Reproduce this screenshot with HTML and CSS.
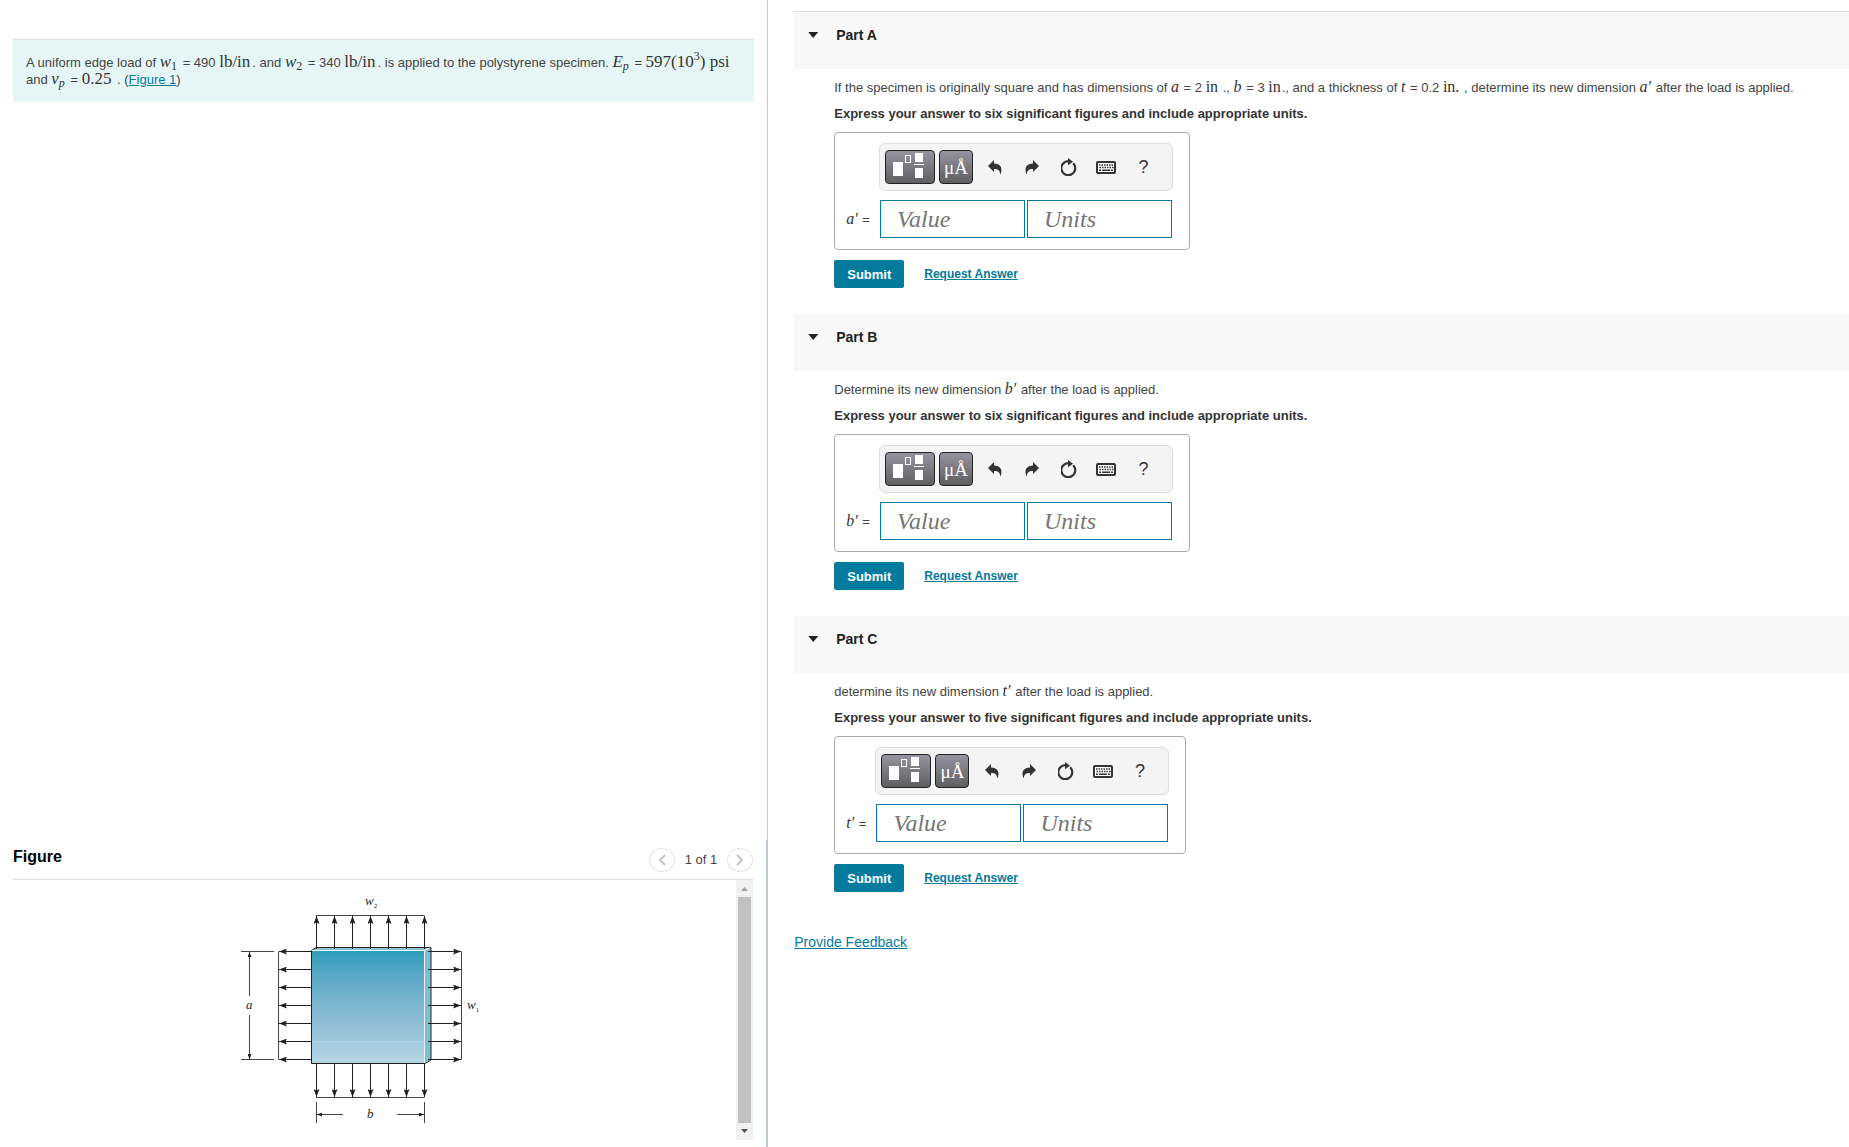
FILE: index.html
```html
<!DOCTYPE html>
<html lang="en">
<head>
    <meta charset="UTF-8">
    <meta name="viewport" content="width=device-width, initial-scale=1.0">
    <title>Polystyrene Specimen</title>
    <link rel="stylesheet" href="styles.css">
</head>
<body>
    <!-- shared icons -->
    <svg class="sprite" aria-hidden="true">
        <symbol id="icon-template" viewBox="0 0 34 28">
            <rect x="0" y="11" width="10" height="14" fill="#fff"/>
            <rect x="12.5" y="4.5" width="5" height="7" fill="none" stroke="#fff"/>
            <rect x="22" y="2" width="8" height="9" fill="#fff"/>
            <rect x="21" y="13" width="10" height="1" fill="#fff"/>
            <rect x="22" y="17" width="8" height="10" fill="#fff"/>
        </symbol>
        <symbol id="icon-undo" viewBox="0 0 14 15">
            <path d="M0 6 6 0v3.400c5 .2 8 2.600 7.400 7.600-.1 1.300-.6 2.600-1.400 3.600.4-3.600-1.400-5.600-6-5.600v3z" fill="#333"/>
        </symbol>
        <symbol id="icon-redo" viewBox="0 0 14 15">
            <path d="M14 6 8 0v3.400C3 3.600 0 6 .6 11c.1 1.300.6 2.600 1.400 3.600C1.600 11 3.400 9 8 9v3z" fill="#333"/>
        </symbol>
        <symbol id="icon-reset" viewBox="0 0 16 18">
            <path d="M12.200 5.200A7 7 0 1 1 8 3.200" fill="none" stroke="#333" stroke-width="2.200"/>
            <path d="M7 0 12 3.800 7 7.200z" fill="#333"/>
        </symbol>
        <symbol id="icon-keyboard" viewBox="0 0 20 13">
            <rect x="1" y="1" width="18" height="11" rx="1" fill="#fff" stroke="#333" stroke-width="2"/>
            <path d="M3 4h14M3.500 6.500h14" stroke="#333" stroke-width="1.500" stroke-dasharray="1.500 1"/>
            <path d="M3 9.200h2M6 9.200h8M15 9.200h2" stroke="#333" stroke-width="1.500"/>
        </symbol>
    </svg>

    <div class="page">
        <div class="left">
            <div class="intro">
                A uniform edge load of <var>w<sub>1</sub></var> = 490 <span class="tex">lb/in</span>. and <var>w<sub>2</sub></var> = 340 <span class="tex">lb/in</span>. is applied to the polystyrene specimen. <var>E<sub><i>p</i></sub></var> = <span class="tex">597(10<sup>3</sup>) psi</span> and <var>ν<sub><i>p</i></sub></var> = <span class="tex">0.25</span> . (<a href="#figure">Figure 1</a>)
            </div>

            <div class="figure" id="figure">
                <div class="figure-head">
                    <h2>Figure</h2>
                    <div class="pager">
                        <button type="button" aria-label="Previous figure">
                            <svg width="8" height="12" viewBox="0 0 8 12"><path d="M7 1 2 6l5 5" fill="none" stroke="#c4c4c4" stroke-width="2"/></svg>
                        </button>
                        <span>1 of 1</span>
                        <button type="button" aria-label="Next figure">
                            <svg width="8" height="12" viewBox="0 0 8 12"><path d="M1 1l5 5-5 5" fill="none" stroke="#c4c4c4" stroke-width="2"/></svg>
                        </button>
                    </div>
                </div>
                <div class="figure-body">
                    <div class="drawing">
                        <svg width="308" height="260" viewBox="0 0 308 260" id="diagram">
                            <defs>
                                <linearGradient id="plate" x1="0" y1="0" x2="0" y2="1">
                                    <stop offset="0" stop-color="#2f9fbd"/>
                                    <stop offset=".2" stop-color="#56a8c5"/>
                                    <stop offset=".6" stop-color="#8abbd4"/>
                                    <stop offset="1" stop-color="#b5d5e5"/>
                                </linearGradient>
                                <marker id="head" markerUnits="userSpaceOnUse" markerWidth="8" markerHeight="6" refX="8" refY="3" orient="auto">
                                    <path d="M0 0 8 3 0 6 1.500 3z" fill="#231f20"/>
                                </marker>
                                <marker id="tip" markerUnits="userSpaceOnUse" markerWidth="5" markerHeight="4" refX="5" refY="2" orient="auto-start-reverse">
                                    <path d="M0 0 5 2 0 4z" fill="#231f20"/>
                                </marker>
                            </defs>
                            <!-- specimen -->
                            <path d="M92.500 70.500 97 67.500h115V180l-6 3.500H92.500z" fill="#8cc4d8" stroke="#231f20"/>
                            <path d="M206 71 211 68.500V180l-5 3z" fill="#7fbdd3"/>
                            <rect x="93" y="71" width="113" height="112" fill="url(#plate)"/>
                            <path d="M93 70.500h112.500V183M205.500 70.500l5-2.500" fill="none" stroke="#eaf6fa"/>
                            <path d="M93 162h112" stroke="#c5e0ec" stroke-width=".7"/>
                            <g id="loads" stroke="#231f20"></g>
                            <!-- extents of the loads -->
                            <path d="M97 35.500h108.500M97 217.500h108.500M59.500 71.500v108M242.500 71.500v108" fill="none" stroke="#444"/>
                            <!-- dimensions -->
                            <path d="M22 71.500h33M22 179.500h33M97.500 222v21M205.500 222v21" stroke="#444"/>
                            <g stroke="#444">
                                <path d="M30.500 116V72" marker-end="url(#tip)"/>
                                <path d="M30.500 135v44" marker-end="url(#tip)"/>
                                <path d="M124 234.500H98" marker-end="url(#tip)"/>
                                <path d="M178 234.500h27" marker-end="url(#tip)"/>
                            </g>
                            <g class="labels">
                                <text x="27" y="129">a</text>
                                <text x="148" y="238">b</text>
                                <text x="146" y="25">w<tspan class="index" dy="3">2</tspan></text>
                                <text x="248" y="129">w<tspan class="index" dy="3">1</tspan></text>
                            </g>
                        </svg>
                    </div>
                    <div class="scrollbar">
                        <svg width="7" height="4" viewBox="0 0 7 4"><path d="M0 4 3.500 0 7 4z" fill="#a3a3a3"/></svg>
                        <div class="thumb"></div>
                        <svg width="7" height="4" viewBox="0 0 7 4"><path d="M0 0h7L3.500 4z" fill="#505050"/></svg>
                    </div>
                </div>
            </div>
        </div>

        <div class="right">
            <section class="part">
                <h3><span class="caret"></span>Part A</h3>
                <div class="part-body">
                    <p>If the specimen is originally square and has dimensions of <var>a</var> = 2 <span class="tex">in</span> ., <var>b</var> = 3 <span class="tex">in</span>., and a thickness of <var>t</var> = 0.2 <span class="tex">in.</span> , determine its new dimension <var>a′</var> after the load is applied.</p>
                    <p class="hint">Express your answer to six significant figures and include appropriate units.</p>
                    <div class="answer">
                        <div class="toolbar">
                            <button type="button" class="dark wide" aria-label="Templates"><svg width="34" height="28"><use href="#icon-template"/></svg></button>
                            <button type="button" class="dark">μÅ</button>
                            <button type="button" class="tool" aria-label="Undo"><svg width="14" height="15"><use href="#icon-undo"/></svg></button>
                            <button type="button" class="tool" aria-label="Redo"><svg width="14" height="15"><use href="#icon-redo"/></svg></button>
                            <button type="button" class="tool" aria-label="Reset"><svg width="16" height="18"><use href="#icon-reset"/></svg></button>
                            <button type="button" class="tool" aria-label="Keyboard"><svg width="20" height="13"><use href="#icon-keyboard"/></svg></button>
                            <button type="button" class="tool">?</button>
                        </div>
                        <label for="value-a"><var>a′</var> =</label>
                        <div class="fields">
                            <input type="text" id="value-a" placeholder="Value">
                            <input type="text" aria-label="Units" placeholder="Units">
                        </div>
                    </div>
                    <div class="actions">
                        <button type="button" class="submit">Submit</button>
                        <a href="#">Request Answer</a>
                    </div>
                </div>
            </section>

            <section class="part">
                <h3><span class="caret"></span>Part B</h3>
                <div class="part-body">
                    <p>Determine its new dimension <var>b′</var> after the load is applied.</p>
                    <p class="hint">Express your answer to six significant figures and include appropriate units.</p>
                    <div class="answer">
                        <div class="toolbar">
                            <button type="button" class="dark wide" aria-label="Templates"><svg width="34" height="28"><use href="#icon-template"/></svg></button>
                            <button type="button" class="dark">μÅ</button>
                            <button type="button" class="tool" aria-label="Undo"><svg width="14" height="15"><use href="#icon-undo"/></svg></button>
                            <button type="button" class="tool" aria-label="Redo"><svg width="14" height="15"><use href="#icon-redo"/></svg></button>
                            <button type="button" class="tool" aria-label="Reset"><svg width="16" height="18"><use href="#icon-reset"/></svg></button>
                            <button type="button" class="tool" aria-label="Keyboard"><svg width="20" height="13"><use href="#icon-keyboard"/></svg></button>
                            <button type="button" class="tool">?</button>
                        </div>
                        <label for="value-b"><var>b′</var> =</label>
                        <div class="fields">
                            <input type="text" id="value-b" placeholder="Value">
                            <input type="text" aria-label="Units" placeholder="Units">
                        </div>
                    </div>
                    <div class="actions">
                        <button type="button" class="submit">Submit</button>
                        <a href="#">Request Answer</a>
                    </div>
                </div>
            </section>

            <section class="part">
                <h3><span class="caret"></span>Part C</h3>
                <div class="part-body">
                    <p>determine its new dimension <var>t′</var> after the load is applied.</p>
                    <p class="hint">Express your answer to five significant figures and include appropriate units.</p>
                    <div class="answer">
                        <div class="toolbar">
                            <button type="button" class="dark wide" aria-label="Templates"><svg width="34" height="28"><use href="#icon-template"/></svg></button>
                            <button type="button" class="dark">μÅ</button>
                            <button type="button" class="tool" aria-label="Undo"><svg width="14" height="15"><use href="#icon-undo"/></svg></button>
                            <button type="button" class="tool" aria-label="Redo"><svg width="14" height="15"><use href="#icon-redo"/></svg></button>
                            <button type="button" class="tool" aria-label="Reset"><svg width="16" height="18"><use href="#icon-reset"/></svg></button>
                            <button type="button" class="tool" aria-label="Keyboard"><svg width="20" height="13"><use href="#icon-keyboard"/></svg></button>
                            <button type="button" class="tool">?</button>
                        </div>
                        <label for="value-c"><var>t′</var> =</label>
                        <div class="fields">
                            <input type="text" id="value-c" placeholder="Value">
                            <input type="text" aria-label="Units" placeholder="Units">
                        </div>
                    </div>
                    <div class="actions">
                        <button type="button" class="submit">Submit</button>
                        <a href="#">Request Answer</a>
                    </div>
                </div>
            </section>

            <a class="feedback" href="#">Provide Feedback</a>
        </div>
    </div>

    <script>
        // seven evenly spaced load arrows on each side of the specimen
        let loads = "";
        for (let i = 0; i < 7; i++) {
            let x = 97.5 + i * 18;
            let y = 71.5 + i * 18;
            loads += `<path d="M${x} 69V36" marker-end="url(#head)"/>`;
            loads += `<path d="M${x} 184v33" marker-end="url(#head)"/>`;
            loads += `<path d="M92 ${y}H60" marker-end="url(#head)"/>`;
            loads += `<path d="M209 ${y}h33" marker-end="url(#head)"/>`;
        }
        document.getElementById("loads").innerHTML = loads;
    </script>
</body>
</html>
```
FILE: styles.css
```css
* {
    box-sizing: border-box;
}
body {
    margin: 0;
    font-family: Arial, "Liberation Sans", sans-serif;
    font-size: 13px;
    color: #444;
    background: #fff;
}
a {
    color: #047a9c;
}
button {
    font-family: inherit;
    cursor: pointer;
}
.sprite {
    display: none;
}
.page {
    display: grid;
    grid-template-columns: 41.55% 1fr;
    min-height: 100vh;
}

/* math text */
var, .tex {
    margin-right: 1px;
    font-family: "Liberation Serif", serif;
    font-size: 16px;
    line-height: 1px;
    color: #333;
}
sub, sup {
    font-size: 12px;
    font-style: normal;
    line-height: 1px;
}
sub {
    vertical-align: -3px;
}

/* left column */
.left {
    display: flex;
    flex-direction: column;
    justify-content: space-between;
    padding-top: 39px;
    border-right: 1px solid #b8cbdd;
}
.intro {
    margin: 0 13px;
    padding: 14px 13px 10px;
    min-height: 63px;
    line-height: 17px;
    background: #e6f6f6;
    border-top: 1px solid #ddd;
}
.intro var, .intro .tex {
    margin-right: 2px;
    font-size: 17px;
}
.figure {
    padding: 0 13px 7px 13px;
    border-right: 1px solid #b8cbdd;
}
.figure-head {
    display: flex;
    justify-content: space-between;
    height: 40px;
    border-bottom: 1px solid #ddd;
}
.figure-head h2 {
    margin: 0;
    font-size: 16px;
    line-height: 34px;
    color: #000;
}
.pager {
    display: flex;
    align-items: center;
    gap: 10px;
    font-size: 13px;
}
.pager button {
    display: flex;
    align-items: center;
    justify-content: center;
    width: 26px;
    height: 24px;
    padding: 0;
    background: #fff;
    border: 1px solid #e3e3e3;
    border-radius: 50%;
}
.figure-body {
    display: flex;
    height: 260px;
}
.drawing {
    flex: 1;
    padding-right: 3px;
    text-align: center;
}
.labels {
    font: italic 13px "Liberation Serif", serif;
    fill: #231f20;
}
.index {
    font-size: 7px;
    font-style: normal;
}
.scrollbar {
    display: flex;
    flex-direction: column;
    align-items: center;
    gap: 6px;
    width: 17px;
    padding: 7px 0;
    background: #f1f1f1;
}
.thumb {
    flex: 1;
    width: 13px;
    background: #c1c1c1;
}

/* right column */
.right {
    padding: 11px 0 24px 26px;
}
.part h3 {
    display: flex;
    gap: 18px;
    height: 57px;
    margin: 0;
    padding: 15px 14px 0;
    font-size: 14px;
    line-height: 16px;
    color: #222;
    background: #f8f8f8;
}
.part:first-child h3 {
    height: 58px;
    border-top: 1px solid #ddd;
}
.caret {
    width: 10px;
    height: 6px;
    margin-top: 5px;
    background: #222;
    clip-path: polygon(0 0, 100% 0, 50% 100%);
}
.part-body {
    padding: 10px 0 26px 40px;
}
.part p {
    margin: 0 0 8px;
    line-height: 18px;
}
.part .hint {
    margin-bottom: 9px;
    font-weight: bold;
    color: #333;
}
.answer {
    display: grid;
    grid-template-columns: auto auto;
    gap: 9px 10px;
    align-items: center;
    width: fit-content;
    padding: 10px 17px 11px 11px;
    border: 1px solid #aaa;
    border-radius: 4px;
}
.answer label {
    white-space: nowrap;
}
.toolbar {
    grid-column: 2;
    display: flex;
    align-items: center;
    height: 48px;
    margin: 0 -1px;
    padding-left: 5px;
    background: #f4f4f4;
    border: 1px solid #ddd;
    border-radius: 6px;
}
.dark {
    width: 34px;
    height: 34px;
    margin-right: 4px;
    padding: 2px 0 0;
    font-family: "Liberation Serif", serif;
    font-size: 19px;
    color: #fff;
    background: linear-gradient(#96949f, #5f5f61);
    border: 1px solid #222;
    border-radius: 4px;
}
.wide {
    width: 50px;
    padding: 0;
}
.tool {
    display: flex;
    align-items: center;
    justify-content: center;
    width: 37px;
    height: 34px;
    padding: 0;
    font-size: 18px;
    color: #333;
    background: none;
    border: none;
}
.fields {
    display: flex;
    gap: 2px;
}
.fields input {
    width: 145px;
    height: 38px;
    padding: 0 16px;
    font: italic 24px "Liberation Serif", serif;
    border: 1px solid #047a9c;
}
.fields input::placeholder {
    color: #757575;
}
.actions {
    display: flex;
    align-items: center;
    gap: 20px;
    margin-top: 10px;
    font-size: 12px;
    font-weight: bold;
}
.submit {
    width: 70px;
    height: 28px;
    padding: 0;
    font-size: 13px;
    font-weight: bold;
    color: #fff;
    background: #047a9c;
    border: none;
    border-radius: 2px;
}
.feedback {
    display: inline-block;
    margin-top: 16px;
    font-size: 14px;
}
```
